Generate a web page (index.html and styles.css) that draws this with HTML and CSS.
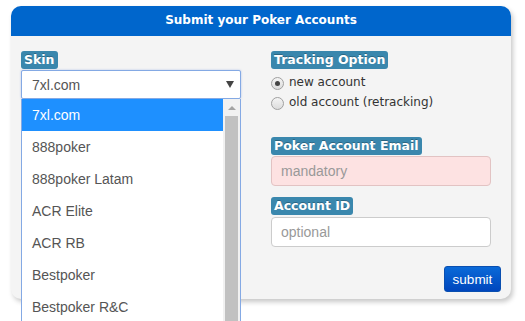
FILE: index.html
```html
<!DOCTYPE html>
<html>
<head>
<meta charset="utf-8">
<link rel="stylesheet" href="styles.css">
</head>
<body>
<div class="card">
  <div class="card-head">Submit your Poker Accounts</div>
  <div class="card-body">
    <div class="col col-left">
      <span class="label">Skin</span>
      <div class="select-wrap">
        <div class="select">
          <span>7xl.com</span>
          <span class="caret"></span>
        </div>
        <div class="dropdown">
          <ul class="options">
            <li class="active">7xl.com</li>
            <li>888poker</li>
            <li>888poker Latam</li>
            <li>ACR Elite</li>
            <li>ACR RB</li>
            <li>Bestpoker</li>
            <li>Bestpoker R&amp;C</li>
          </ul>
          <div class="scrollbar">
            <span class="up"></span>
            <span class="thumb"></span>
          </div>
        </div>
      </div>
    </div>
    <div class="col col-right">
      <span class="label">Tracking Option</span>
      <div class="radios">
        <div class="radio"><span class="dot checked"></span>new account</div>
        <div class="radio"><span class="dot"></span>old account (retracking)</div>
      </div>
      <span class="label label-email">Poker Account Email</span>
      <div class="input input-pink"><span class="ph">mandatory</span></div>
      <span class="label label-id">Account ID</span>
      <div class="input input-id"><span class="ph">optional</span></div>
      <div class="actions"><button class="btn">submit</button></div>
    </div>
  </div>
</div>
</body>
</html>
```

FILE: styles.css
```css
html, body {
  margin: 0;
  padding: 0;
  background: #ffffff;
}
body {
  padding: 6px 0 0 11px;
  font-family: "Liberation Sans", Arial, sans-serif;
  height: 321px;
  box-sizing: border-box;
  overflow: hidden;
}
.card {
  width: 500px;
  background: #f4f4f4;
  border-radius: 10px;
  box-shadow: 2px 3px 5px rgba(0,0,0,0.22);
}
.card-head {
  height: 30px;
  line-height: 29px;
  background: #0066cc;
  color: #fff;
  text-align: center;
  font-family: "DejaVu Sans", Verdana, sans-serif;
  font-weight: bold;
  font-size: 12px;
  border-radius: 10px 10px 0 0;
}
.card-body {
  display: flex;
  gap: 30px;
  padding: 15px 10px 7px 10px;
}
.col {
  display: flex;
  flex-direction: column;
  align-items: flex-start;
}
.col-left { width: 220px; }
.col-right { flex: 1; }
.label {
  display: inline-block;
  background: #3a87ad;
  color: #fff;
  font-family: "DejaVu Sans", Verdana, sans-serif;
  font-weight: bold;
  font-size: 12.5px;
  line-height: 18px;
  height: 18px;
  padding: 0 3px;
  border-radius: 3px;
  text-shadow: 0 -1px 0 rgba(0,0,0,0.25);
}
.select-wrap {
  position: relative;
  width: 220px;
  margin-top: 1px;
}
.select {
  box-sizing: border-box;
  height: 29px;
  border: 1px solid #84a9e4;
  border-radius: 2px;
  background: #fff;
  display: flex;
  align-items: center;
  justify-content: space-between;
  padding: 0 5px 0 10px;
  font-size: 14px;
  color: #555;
  box-shadow: 0 0 2px rgba(100,140,220,0.5);
}
.caret {
  width: 0;
  height: 0;
  border-left: 4px solid transparent;
  border-right: 4px solid transparent;
  border-top: 7px solid #444;
  margin-right: 1px;
}
.dropdown {
  position: absolute;
  top: 29px;
  left: 0;
  width: 220px;
  height: 222px;
  box-sizing: border-box;
  border: 1px solid #84a9e4;
  border-top: none;
  border-bottom: none;
  background: #fff;
  display: flex;
  overflow: hidden;
  z-index: 5;
}
.options {
  list-style: none;
  margin: 0;
  padding: 0;
  flex: 1;
}
.options li {
  height: 32px;
  line-height: 32px;
  padding-left: 10px;
  font-size: 14px;
  color: #555;
}
.options li.active {
  background: #1e90ff;
  color: #fff;
}
.scrollbar {
  width: 17px;
  background: #f1f1f1;
  display: flex;
  flex-direction: column;
  align-items: center;
}
.up {
  width: 0;
  height: 0;
  border-left: 4px solid transparent;
  border-right: 4px solid transparent;
  border-bottom: 4px solid #a3a3a3;
  margin-top: 7px;
}
.thumb {
  width: 13px;
  flex: 1;
  background: #c1c1c1;
  margin-top: 6px;
}
.radios {
  margin-top: 3px;
  display: flex;
  flex-direction: column;
}
.radio {
  display: flex;
  align-items: center;
  height: 20px;
  font-family: "DejaVu Sans", Verdana, sans-serif;
  font-size: 12px;
  color: #333;
}
.dot {
  box-sizing: border-box;
  width: 13px;
  height: 13px;
  border-radius: 50%;
  border: 1px solid #a0a0a0;
  background: linear-gradient(#f4f4f4, #dcdcdc);
  margin: 3px 5px 0 0;
  position: relative;
}
.dot.checked::after {
  content: "";
  position: absolute;
  left: 3px;
  top: 3px;
  width: 5px;
  height: 5px;
  border-radius: 50%;
  background: #444;
}
.label-email { margin-top: 25px; }
.label-id { margin-top: 11px; }
.input {
  box-sizing: border-box;
  width: 220px;
  height: 30px;
  margin-top: 1px;
  border: 1px solid #cccccc;
  border-radius: 4px;
  background: #fff;
  display: flex;
  align-items: center;
  padding-left: 9px;
  font-size: 14px;
}
.input-id { margin-top: 2px; }
.input-pink {
  background: #fde2e2;
  border-color: #e2c3c3;
}
.ph { color: #999; }
.actions {
  align-self: stretch;
  display: flex;
  justify-content: flex-end;
  margin-top: 19px;
}
.btn {
  width: 57px;
  height: 26px;
  border: 1px solid #0a4fb0;
  border-radius: 3px;
  background: linear-gradient(#0a6ad8, #0046bd);
  color: #fff;
  font-family: "Liberation Sans", Arial, sans-serif;
  font-size: 13.5px;
  padding: 0;
}
```
